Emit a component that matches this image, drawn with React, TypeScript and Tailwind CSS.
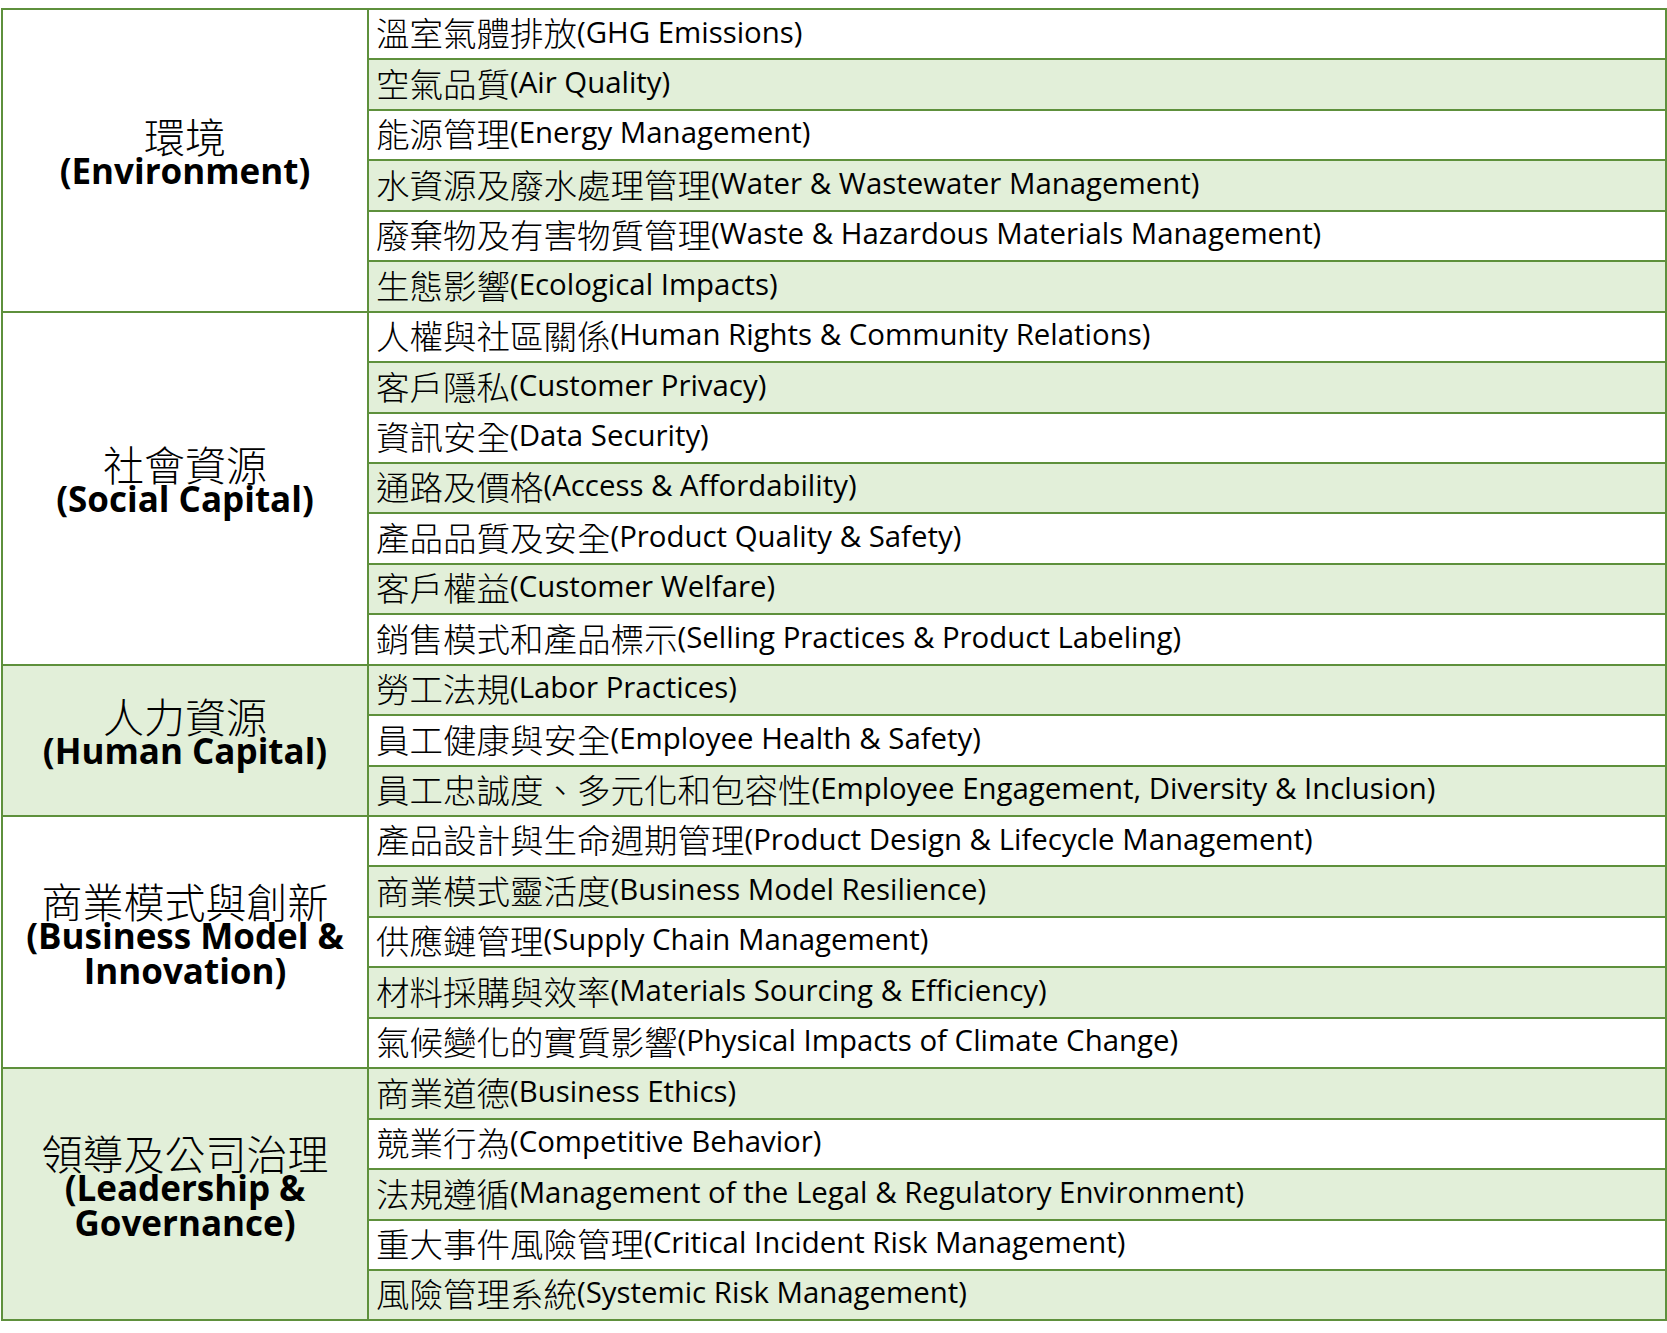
import React from "react";

type Group = {
  zh: string;
  en: React.ReactNode;
  green: boolean;
  rows: [string, string][];
};

const groups: Group[] = [
  {
    zh: "環境",
    en: "(Environment)",
    green: false,
    rows: [
      ["溫室氣體排放", "(GHG Emissions)"],
      ["空氣品質", "(Air Quality)"],
      ["能源管理", "(Energy Management)"],
      ["水資源及廢水處理管理", "(Water & Wastewater Management)"],
      ["廢棄物及有害物質管理", "(Waste & Hazardous Materials Management)"],
      ["生態影響", "(Ecological Impacts)"],
    ],
  },
  {
    zh: "社會資源",
    en: "(Social Capital)",
    green: false,
    rows: [
      ["人權與社區關係", "(Human Rights & Community Relations)"],
      ["客戶隱私", "(Customer Privacy)"],
      ["資訊安全", "(Data Security)"],
      ["通路及價格", "(Access & Affordability)"],
      ["產品品質及安全", "(Product Quality & Safety)"],
      ["客戶權益", "(Customer Welfare)"],
      ["銷售模式和產品標示", "(Selling Practices & Product Labeling)"],
    ],
  },
  {
    zh: "人力資源",
    en: "(Human Capital)",
    green: true,
    rows: [
      ["勞工法規", "(Labor Practices)"],
      ["員工健康與安全", "(Employee Health & Safety)"],
      ["員工忠誠度、多元化和包容性", "(Employee Engagement, Diversity & Inclusion)"],
    ],
  },
  {
    zh: "商業模式與創新",
    en: (
      <>
        (Business Model &amp;
        <br />
        Innovation)
      </>
    ),
    green: false,
    rows: [
      ["產品設計與生命週期管理", "(Product Design & Lifecycle Management)"],
      ["商業模式靈活度", "(Business Model Resilience)"],
      ["供應鏈管理", "(Supply Chain Management)"],
      ["材料採購與效率", "(Materials Sourcing & Efficiency)"],
      ["氣候變化的實質影響", "(Physical Impacts of Climate Change)"],
    ],
  },
  {
    zh: "領導及公司治理",
    en: (
      <>
        (Leadership &amp;
        <br />
        Governance)
      </>
    ),
    green: true,
    rows: [
      ["商業道德", "(Business Ethics)"],
      ["競業行為", "(Competitive Behavior)"],
      ["法規遵循", "(Management of the Legal & Regulatory Environment)"],
      ["重大事件風險管理", "(Critical Incident Risk Management)"],
      ["風險管理系統", "(Systemic Risk Management)"],
    ],
  },
];

export default function App() {
  let idx = 0;
  return (
    <div className="w-[1667px] h-[1333px] bg-white overflow-hidden">
      <div className="ml-[1px] mt-[8px] w-[1666px] border-l-2 border-t-2 border-[#5e903c] text-black">
        {groups.map((g, gi) => (
          <div key={gi} className="flex">
            <div
              className={`w-[366px] shrink-0 border-r-2 border-b-2 border-[#5e903c] flex flex-col items-center justify-center text-center pb-[14px] ${
                g.green ? "bg-[#e2efd9]" : "bg-white"
              }`}
            >
              <div className="text-[41px] leading-[35px] font-[family-name:'Noto_Sans_CJK_TC','Noto_Sans_CJK_SC',sans-serif] font-light">
                {g.zh}
              </div>
              <div className="text-[35px] leading-[35px] font-bold font-[family-name:'Open_Sans',sans-serif]">
                {g.en}
              </div>
            </div>
            <div className="flex-1 flex flex-col">
              {g.rows.map((r, ri) => {
                const green = idx % 2 === 1;
                idx++;
                return (
                  <div
                    key={ri}
                    className={`h-[50.45px] border-r-2 border-b-2 border-[#5e903c] flex items-center pl-[7px] pb-[4px] whitespace-nowrap ${
                      green ? "bg-[#e2efd9]" : "bg-white"
                    }`}
                  >
                    <span className="text-[33.5px] leading-none font-[family-name:'Noto_Sans_CJK_TC','Noto_Sans_CJK_SC',sans-serif] font-light">
                      {r[0]}
                    </span>
                    <span className="text-[29.4px] leading-none font-[family-name:'Open_Sans',sans-serif]">
                      {r[1]}
                    </span>
                  </div>
                );
              })}
            </div>
          </div>
        ))}
      </div>
    </div>
  );
}
